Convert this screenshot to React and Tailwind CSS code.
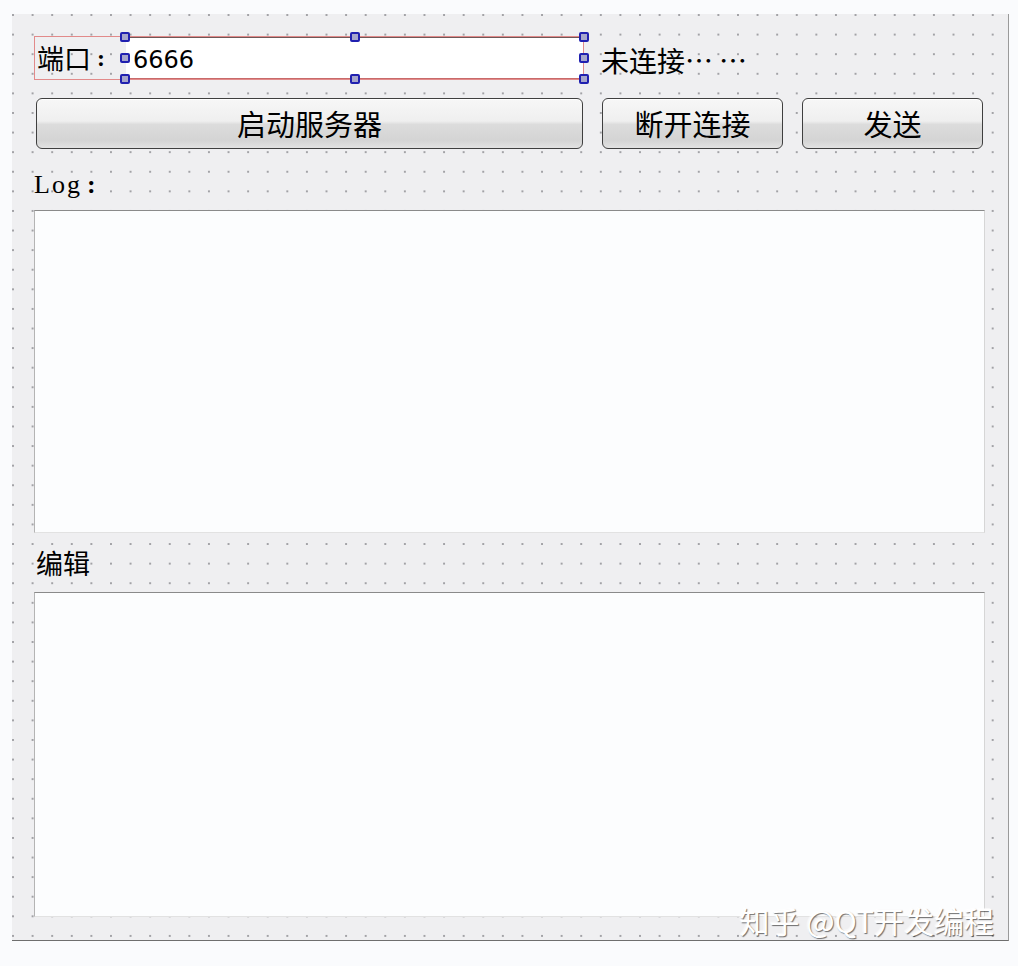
import React from 'react';

const cjk = "font-['Noto_Sans_CJK_SC','Noto_Sans',sans-serif]";

const Handle = ({ hidden }) => (
    <span className={`w-[10px] h-[10px] border-2 border-[#2020b0] bg-[#a6a6cc] rounded-[2px] ${hidden ? 'invisible' : ''}`} />
);

const HandleRow = ({ middle = true }) => (
    <div className="flex justify-between">
        <Handle />
        <Handle hidden={!middle} />
        <Handle />
    </div>
);

const QtButton = ({ label, width }) => (
    <button
        className={`${width} h-[51px] rounded-[6px] border-[1.5px] border-[#3f3f3f] bg-[linear-gradient(to_bottom,#f7f7f7_0%,#efefef_45%,#dcdcdc_52%,#d4d4d4_85%,#e2e2e2_100%)] shadow-[inset_0_1px_0_#ffffff] text-[29px] text-black leading-none ${cjk}`}
    >
        {label}
    </button>
);

const TextBox = ({ height }) => (
    <div className={`w-[951px] ${height} bg-[#fcfdfe] border border-t-[#8a8a8a] border-l-[#b4b4b4] border-r-[#d6d6d6] border-b-[#e2e2e2]`} />
);

export default function App() {
    return (
        <div className="relative w-[1018px] h-[966px] bg-[#fafbfd] pt-[14px] pl-[12px]">
            <div className="w-[997px] h-[927px] bg-[#efeff1] bg-[radial-gradient(circle,#a2a2a6_0.9px,transparent_1.2px)] bg-[length:19.6px_19.6px] bg-[position:-8.8px_-8.8px] border-r border-b border-r-[#9a9a9a] border-b-[#6e6e6e] pl-[22px] pt-[22px]">
                {/* port row */}
                <div className="flex items-center h-[44px]">
                    <div className="flex w-[550px] h-[44px] border border-[#e28a8a]">
                        <div className={`w-[91px] pl-[2px] flex items-center text-[27px] text-black ${cjk}`}>
                            端口<span className="ml-[6px] font-['Liberation_Serif',serif] font-bold text-[24px]">:</span>
                        </div>
                        <div className="relative flex-1 bg-white border-t border-b border-t-[#6e5858] border-b-[#c86a6a] flex items-center pl-[7px] pt-[4px] text-[24px] text-black font-['DejaVu_Sans',sans-serif]">
                            6666
                            <div className="absolute -inset-[6px] flex flex-col justify-between pointer-events-none">
                                <HandleRow />
                                <HandleRow middle={false} />
                                <HandleRow />
                            </div>
                        </div>
                    </div>
                    <span className={`ml-[17px] pt-[3px] text-[28px] text-black ${cjk}`}>
                        未连接<span className="tracking-[6px]">……</span>
                    </span>
                </div>

                {/* buttons */}
                <div className="flex gap-[19px] mt-[18px] ml-[2px]">
                    <QtButton label="启动服务器" width="w-[547px]" />
                    <QtButton label="断开连接" width="w-[181px]" />
                    <QtButton label="发送" width="w-[181px]" />
                </div>

                <div className="mt-[17px] h-[36px] flex items-center text-[26px] text-black font-['Liberation_Serif',serif]">
                    <span className="tracking-[2px]">Log</span>
                    <span className="ml-[5px] font-bold">:</span>
                </div>
                <div className="mt-[8px]">
                    <TextBox height="h-[323px]" />
                </div>

                <div className={`mt-[12px] h-[36px] pl-[2px] flex items-center text-[27px] text-black ${cjk}`}>编辑</div>
                <div className="mt-[11px]">
                    <TextBox height="h-[325px]" />
                </div>
            </div>

            <div className={`absolute right-[24px] top-[898px] text-[30px] text-white ${cjk} [text-shadow:1px_1px_1px_rgba(0,0,0,0.55),-1px_-1px_1px_rgba(255,255,255,0.6)]`}>
                知乎 @QT开发编程
            </div>
        </div>
    );
}
